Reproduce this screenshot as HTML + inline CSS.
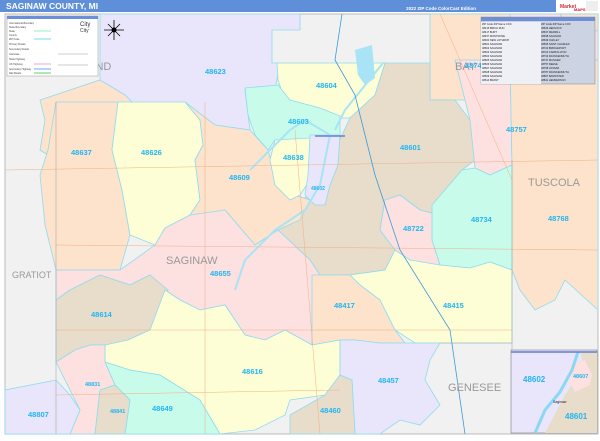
<!DOCTYPE html>
<html><head><style>
body{margin:0;width:600px;height:436px;overflow:hidden;background:#fff;font-family:"Liberation Sans",sans-serif}
</style></head><body>
<svg width="600" height="436" viewBox="0 0 600 436" xmlns="http://www.w3.org/2000/svg" font-family="Liberation Sans, sans-serif">
<rect x="0" y="0" width="600" height="436" fill="#fff"/>
<rect x="0" y="0" width="600" height="12" fill="#5f8fd8"/>
<text x="6" y="9" font-size="8.5" font-weight="bold" fill="#fff">SAGINAW COUNTY, MI</text>
<text x="476" y="10" font-size="4.5" font-weight="bold" fill="#fff" text-anchor="end">2022 ZIP Code ColorCast Edition</text>
<rect x="556" y="0" width="44" height="13" fill="#fff"/>
<text x="560" y="8" font-size="5" font-weight="bold" fill="#c33">Market</text>
<text x="574" y="11" font-size="4" font-weight="bold" fill="#e03">MAPS</text>
<rect x="586" y="1" width="12" height="10" fill="#eee"/>
<rect x="5" y="14" width="593" height="420" fill="#f1f1f1" stroke="#bbb" stroke-width="1"/>
<g stroke="#8ddcf0" stroke-width="0.8">
<polygon points="100,14 300,14 300,30 272,30 272,63 280,63 275,90 245,90 250,130 215,125 195,130 170,108 140,110 120,95 100,90" fill="#e9e5fb"/>
<polygon points="100,80 125,95 140,110 130,130 115,150 100,160 56,160 40,150 45,120 40,100" fill="#fde2cc"/>
<polygon points="430,14 598,14 598,60 510,60 490,100 455,100 430,100 430,63" fill="#fde2cc"/>
<polygon points="510,14 560,14 575,40 598,30 598,60 510,60" fill="#fde0e0"/>
<polygon points="277,63 385,63 375,95 350,118 335,118 320,110 300,108 285,100 278,80" fill="#fefed6"/>
<polygon points="245,88 278,85 290,100 320,108 340,116 340,138 275,140 268,150 255,135 248,115" fill="#c8fbea"/>
<polygon points="385,63 430,63 430,100 455,100 470,120 475,160 462,170 450,200 440,215 420,210 400,195 385,200 380,230 395,250 385,270 350,275 320,275 310,260 278,230 290,205 310,195 320,170 335,150 350,118 375,95" fill="#e8dccb"/>
<polygon points="455,60 510,60 512,165 490,175 475,168 470,120" fill="#fde0e0"/>
<polygon points="510,60 598,60 598,310 565,280 555,300 535,310 520,290 512,270 512,165" fill="#fde2cc"/>
<polygon points="56,102 118,102 112,150 122,190 130,235 120,270 56,270 45,225 40,175 48,150" fill="#fde2cc"/>
<polygon points="118,102 185,102 200,120 203,145 195,160 200,200 190,215 165,228 155,245 130,235 122,190 112,150" fill="#fefed6"/>
<polygon points="185,102 215,125 250,130 268,150 275,175 295,195 310,200 300,220 278,230 255,245 225,210 200,215 190,215 200,200 195,160 203,145 200,120" fill="#fde2cc"/>
<polygon points="275,140 310,138 310,180 300,195 290,200 275,185 270,160" fill="#fefed6"/>
<polygon points="310,135 340,135 338,165 330,185 325,205 315,205 305,195 308,175" fill="#e9e5fb"/>
<polygon points="385,200 400,195 420,210 440,215 432,240 440,265 430,270 410,260 395,250 380,230" fill="#fde0e0"/>
<polygon points="432,205 462,170 475,168 490,175 512,165 512,270 490,262 470,268 440,265 432,240" fill="#c8fbea"/>
<polygon points="56,270 120,270 155,245 165,228 190,215 225,210 255,245 278,230 310,260 320,275 312,300 312,345 285,330 265,340 245,335 225,305 200,310 180,300 165,290 150,275 130,285 100,275 70,290 56,300" fill="#fde0e0"/>
<polygon points="56,300 70,290 100,275 130,285 150,275 168,290 160,320 150,330 128,340 110,345 90,345 75,350 56,362" fill="#e8dccb"/>
<polygon points="350,275 385,270 395,250 410,260 440,265 470,268 490,262 512,270 512,343 450,343 415,343 395,330 380,300 360,285" fill="#fefed6"/>
<polygon points="312,275 350,275 360,285 380,300 395,330 405,343 380,343 355,340 340,340 312,345" fill="#fde2cc"/>
<polygon points="105,345 128,340 150,330 165,290 180,300 200,310 225,305 245,335 265,340 285,330 312,345 340,340 340,375 325,395 290,400 285,415 255,430 220,434 200,400 160,375 130,370 105,362" fill="#fefed6"/>
<polygon points="340,340 355,340 380,343 440,343 430,360 425,380 440,405 420,425 400,420 380,434 355,434 352,380 340,375" fill="#e9e5fb"/>
<polygon points="325,395 340,375 352,380 355,434 290,434 290,415" fill="#e8dccb"/>
<polygon points="105,362 130,370 160,375 200,400 220,434 125,434 130,400 115,385" fill="#c8fbea"/>
<polygon points="56,362 75,350 90,345 105,345 105,362 115,385 100,390 95,434 70,434 80,410" fill="#fde0e0"/>
<polygon points="100,390 115,385 130,400 125,434 95,434" fill="#e8dccb"/>
<polygon points="5,390 56,380 70,395 80,410 70,434 5,434" fill="#e9e5fb"/>
</g>
<polygon points="355,50 372,45 375,78 365,85 358,75" fill="#a8e4f6"/>
<path d="M250,170 L290,130 L305,120 L330,135 L320,185 L305,210 L275,230 L245,260 L235,290" stroke="#a8e4f6" stroke-width="2" fill="none"/>
<path d="M383,63 L345,110 L335,130" stroke="#a8e4f6" stroke-width="2" fill="none"/>
<g stroke="#f2b080" stroke-width="0.5" fill="none">
<path d="M5,170 L598,160"/><path d="M56,245 L598,250"/><path d="M56,330 L512,330"/><path d="M56,395 L340,390"/>
<path d="M205,102 L205,434"/><path d="M295,130 L320,434"/><path d="M440,14 L512,180"/>
</g>
<path d="M342,14 L335,60 L355,95 L375,175 L400,250 L450,330 L465,434" stroke="#3a9ad8" stroke-width="0.8" fill="none"/>
<path d="M315,136 L345,136" stroke="#6a7fd0" stroke-width="1.5"/>
<g stroke="#aaa" stroke-width="0.6" fill="none">
<path d="M56,102 L56,434"/><path d="M512,160 L512,434"/><path d="M440,343 L512,343"/>
</g>
<g fill="#999" font-size="11">
<text x="82" y="70">LAND</text>
<text x="455" y="70">BAY</text>
<text x="528" y="186">TUSCOLA</text>
<text x="166" y="264">SAGINAW</text>
<text x="12" y="278" font-size="9">GRATIOT</text>
<text x="448" y="391">GENESEE</text>
</g>
<g fill="#22b6f0" font-size="7.5" font-weight="bold">
<text x="205" y="74">48623</text><text x="316" y="88">48604</text><text x="288" y="124">48603</text>
<text x="465" y="68">48747</text><text x="506" y="132">48757</text><text x="400" y="150">48601</text>
<text x="71" y="155">48637</text><text x="141" y="155">48626</text><text x="229" y="180">48609</text>
<text x="283" y="160">48638</text><text x="311" y="190" font-size="5">48602</text>
<text x="471" y="222">48734</text><text x="548" y="221">48768</text><text x="403" y="231">48722</text>
<text x="210" y="276">48655</text><text x="443" y="308">48415</text><text x="334" y="308">48417</text>
<text x="91" y="317">48614</text><text x="242" y="374">48616</text><text x="378" y="383">48457</text>
<text x="320" y="413">48460</text><text x="152" y="411">48649</text><text x="85" y="386" font-size="5.5">48831</text>
<text x="110" y="413" font-size="5.5">48841</text><text x="28" y="417">48807</text>
</g>
<rect x="7" y="16" width="91" height="60" fill="#fff" stroke="#999" stroke-width="0.5"/>
<rect x="7" y="16" width="91" height="3" fill="#6c8fd8"/>
<g font-size="2.5" fill="#444">
<text x="9" y="24">International Boundary</text><text x="9" y="28">State Boundary</text><text x="9" y="32">State</text>
<text x="9" y="36">County</text><text x="9" y="40">ZIP Code</text><text x="9" y="45">Primary Roads</text>
<text x="9" y="50">Secondary Roads</text><text x="9" y="55">Interstate</text><text x="9" y="60">State Highway</text>
<text x="9" y="65">US Highway</text><text x="9" y="70">Secondary Highway</text><text x="9" y="74">Rail Roads</text>
</g>
<g stroke-width="1"><line x1="34" y1="31" x2="51" y2="31" stroke="#8ff0c0"/><line x1="34" y1="39" x2="51" y2="39" stroke="#7ad8f0"/><line x1="34" y1="64" x2="51" y2="64" stroke="#f0a0d0"/><line x1="34" y1="69" x2="51" y2="69" stroke="#66aaff"/><line x1="34" y1="73" x2="51" y2="73" stroke="#66cc66"/></g>
<text x="80" y="26" font-size="6" fill="#333">City</text><text x="80" y="32" font-size="5" fill="#333">City</text>
<line x1="58" y1="54" x2="88" y2="54" stroke="#999" stroke-width="0.6"/><line x1="58" y1="65" x2="88" y2="65" stroke="#999" stroke-width="0.6"/>
<g stroke="#000" stroke-width="0.8"><line x1="114" y1="20" x2="114" y2="40"/><line x1="104" y1="30" x2="124" y2="30"/><line x1="108" y1="24" x2="120" y2="36"/><line x1="120" y1="24" x2="108" y2="36"/></g>
<circle cx="114" cy="30" r="2.5" fill="#000"/>
<rect x="481" y="17" width="114" height="67" fill="#ccd3e2" stroke="#888" stroke-width="0.5"/>
<rect x="481" y="22" width="60" height="62" fill="#eef0f5"/>
<rect x="481" y="17" width="114" height="4" fill="#6c8fd8"/>
<g font-size="2.6" fill="#222">
<text x="482" y="25">ZIP Code   ZIP Name       COC</text><text x="541" y="25">ZIP Code  ZIP Name      COC</text>
<text x="482" y="29">48415   BIRCH RUN</text><text x="482" y="33">48417   BURT</text><text x="482" y="37">48457   MONTROSE</text><text x="482" y="41">48460   NEW LOTHROP</text><text x="482" y="45">48601   SAGINAW</text><text x="482" y="49">48602   SAGINAW</text><text x="482" y="53">48603   SAGINAW</text><text x="482" y="57">48604   SAGINAW</text><text x="482" y="61">48605   SAGINAW</text><text x="482" y="65">48606   SAGINAW</text><text x="482" y="69">48607   SAGINAW</text><text x="482" y="73">48608   SAGINAW</text><text x="482" y="77">48609   SAGINAW</text><text x="482" y="81">48614   BRANT</text>
<text x="541" y="29">48626   HEMLOCK</text><text x="541" y="33">48637   MERRILL</text><text x="541" y="37">48638   SAGINAW</text><text x="541" y="41">48649   OAKLEY</text><text x="541" y="45">48655   SAINT CHARLES</text><text x="541" y="49">48722   BRIDGEPORT</text><text x="541" y="53">48724   CARROLLTON</text><text x="541" y="57">48734   FRANKENMUTH</text><text x="541" y="61">48747   MUNGER</text><text x="541" y="65">48757   REESE</text><text x="541" y="69">48768   VASSAR</text><text x="541" y="73">48787   FRANKENMUTH</text><text x="541" y="77">48807   BANNISTER</text><text x="541" y="81">48841   HENDERSON</text>
</g>
<rect x="511" y="350" width="86" height="83" fill="#e9e5fb" stroke="#999" stroke-width="0.8"/>
<polygon points="580,352 597,352 597,433 545,433 565,395 575,380 585,370" fill="#e8dccb"/>
<polygon points="570,365 585,360 592,375 590,385 575,392 568,380" fill="#fde0e0"/>
<path d="M578,352 L572,370 L560,392 L545,410 L535,433" stroke="#8ad8f3" stroke-width="3" fill="none"/>
<line x1="511" y1="352" x2="597" y2="352" stroke="#5f7fd0" stroke-width="1.5"/>
<text x="523" y="382" font-size="8" font-weight="bold" fill="#22b6f0">48602</text>
<text x="573" y="378" font-size="5.5" font-weight="bold" fill="#22b6f0">48607</text>
<text x="565" y="419" font-size="8" font-weight="bold" fill="#22b6f0">48601</text>
<text x="553" y="403" font-size="3.5" fill="#222">Saginaw</text>
</svg>
</body></html>
